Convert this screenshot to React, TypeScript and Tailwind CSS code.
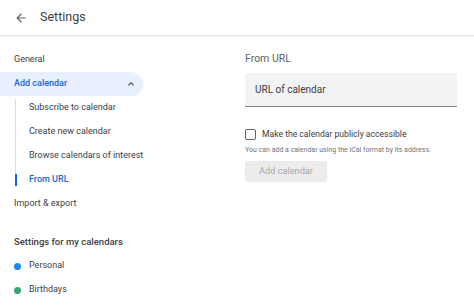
import React from "react";

const font = { fontFamily: "Roboto, 'Noto Sans', Arial, sans-serif" };

function SubItem({ label, active }: { label: string; active?: boolean }) {
  return (
    <div className="relative h-[24px] flex items-center pl-[29px]">
      {active && <div className="absolute left-[15px] top-[6px] h-[12px] w-[2px] bg-[#1967d2]" />}
      <span className={`text-[9px] ${active ? "text-[#1967d2] font-medium" : "text-[#3c4043]"}`}>{label}</span>
    </div>
  );
}

export default function App() {
  return (
    <div className="w-[474px] h-[307px] bg-white overflow-hidden text-[#3c4043]" style={font}>
      <header className="h-[36px] flex items-center border-b border-[#e6e6e6] shadow-[0_1px_2px_rgba(0,0,0,0.05)]">
        <svg className="ml-[14px] w-[14px] h-[14px]" viewBox="0 0 24 24" fill="#5f6368">
          <path d="M20 11H7.83l5.59-5.59L12 4l-8 8 8 8 1.41-1.41L7.83 13H20v-2z" />
        </svg>
        <span className="ml-[12px] text-[12.5px] text-[#3c4043]">Settings</span>
      </header>
      <div className="flex">
        <nav className="w-[245px] pt-[12px] shrink-0">
          <div className="h-[24px] flex items-center pl-[14px] text-[9px]">General</div>
          <div className="h-[24px] w-[143px] flex items-center justify-between pl-[14px] pr-[6px] bg-[#e8f0fe] rounded-r-full">
            <span className="text-[9px] font-medium text-[#1967d2]">Add calendar</span>
            <svg className="w-[12px] h-[12px]" viewBox="0 0 24 24" fill="#3c4043">
              <path d="M7.41 15.41 12 10.83l4.59 4.58L18 14l-6-6-6 6z" />
            </svg>
          </div>
          <div className="relative">
            <div className="absolute left-[15px] top-[3px] bottom-[5px] w-[1px] bg-[#dadce0]" />
            <SubItem label="Subscribe to calendar" />
            <SubItem label="Create new calendar" />
            <SubItem label="Browse calendars of interest" />
            <SubItem label="From URL" active />
          </div>
          <div className="h-[24px] flex items-center pl-[14px] text-[9px]">Import &amp; export</div>
          <div className="mt-[14px] h-[24px] flex items-center pl-[14px] text-[9.5px] font-medium">Settings for my calendars</div>
          <div className="h-[24px] flex items-center pl-[14px] text-[9px]">
            <span className="w-[7px] h-[7px] rounded-full bg-[#1e88e5] mr-[8px]" />
            Personal
          </div>
          <div className="h-[24px] flex items-center pl-[14px] text-[9px]">
            <span className="w-[7px] h-[7px] rounded-full bg-[#33a876] mr-[8px]" />
            Birthdays
          </div>
        </nav>
        <main className="flex-1 pr-[17px] pt-[15px]">
          <div className="text-[10.5px] leading-[16px] text-[#5f6368]">From URL</div>
          <div className="mt-[6px] h-[34px] bg-[#f1f3f4] border-b border-[#80868b] rounded-t-[3px] flex items-center pl-[10px]">
            <span className="text-[10px] text-[#3c4043]">URL of calendar</span>
          </div>
          <div className="mt-[21px] flex items-center">
            <div className="w-[11px] h-[11px] border-[1.5px] border-[#5f6368] rounded-[2px]" />
            <span className="ml-[6px] text-[8.6px] text-[#3c4043]">Make the calendar publicly accessible</span>
          </div>
          <div className="mt-[4px] text-[7px] leading-[10px] text-[#70757a]">You can add a calendar using the iCal format by its address.</div>
          <div className="mt-[6px] w-[82px] h-[21px] rounded-[3px] bg-[#ececec] flex items-center justify-center text-[9.2px] text-[#a8a8a8]">Add calendar</div>
        </main>
      </div>
    </div>
  );
}
